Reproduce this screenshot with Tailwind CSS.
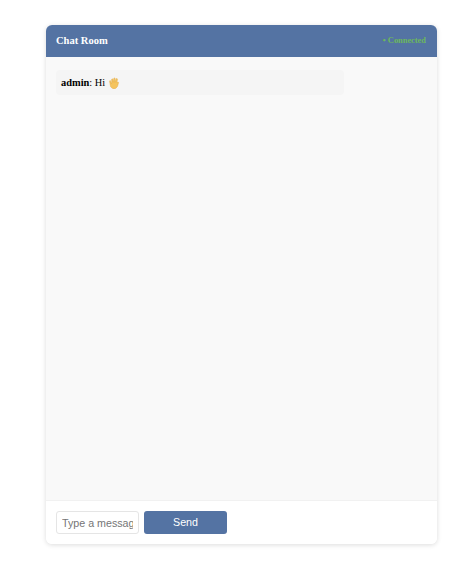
<!DOCTYPE html>
<html lang="en">
<head>
  <meta charset="UTF-8" />
  <title>Chat Room</title>
  <script src="https://cdn.jsdelivr.net/npm/@tailwindcss/browser@4"></script>
</head>
<body class="bg-white h-[565px] overflow-hidden font-['Liberation_Serif',serif]">
  <div class="pt-[25px] pl-[46px]">
    <div class="w-[391px] h-[519px] flex flex-col rounded-md overflow-hidden bg-white shadow-[0_1px_5px_rgba(0,0,0,0.14)]">

      <!-- Header -->
      <div class="h-[32px] shrink-0 flex items-center justify-between pl-[10px] pr-[11px] bg-[#5473a3] text-white">
        <span class="text-[10.5px] font-bold">Chat Room</span>
        <span class="text-[8.4px] font-bold text-[#6cb85c]">• Connected</span>
      </div>

      <!-- Messages -->
      <div class="flex-1 bg-[#f9f9f9] pt-[13px] pl-[10px]">
        <div class="w-[288px] h-[25px] flex items-center pl-[5px] rounded bg-[#f5f5f5] text-[10.4px] text-black">
          <b>admin</b><span>: Hi&nbsp;</span>
          <svg class="w-[12px] h-[12px]" viewBox="0 0 12 12">
            <g transform="rotate(18 6 6)">
              <path d="M2 5 L4 7.6 L2.6 3.2 Q3 2.2 3.8 2.8 L5 5.6 L4.4 1.6 Q5 0.6 5.8 1.4 L6.8 5 L6.8 1.2 Q7.6 0.4 8.2 1.4 L8.6 4.6 Q9.4 3.6 10.2 4 L10.4 8 Q9.8 11.8 6.4 11.6 Q3.6 11.4 2.8 8.6 L1.2 5.6 Q1.2 4.4 2 5 Z" fill="#f5c45e" stroke="#e3ab45" stroke-width="0.4" />
            </g>
          </svg>
        </div>
      </div>

      <!-- Input bar -->
      <div class="h-[44px] shrink-0 flex items-center gap-[5px] pl-[10px] bg-white border-t border-[#f1f1f1]">
        <input type="text" placeholder="Type a message..." class="w-[83px] h-[23px] px-[5px] rounded-[3px] border border-[#e5e5e5] bg-white text-[10.7px] font-['Liberation_Sans',sans-serif] placeholder:text-[#757575] outline-none" />
        <button class="w-[83px] h-[23px] rounded-[3px] bg-[#5473a3] text-white text-[10.7px] font-['Liberation_Sans',sans-serif]">Send</button>
      </div>

    </div>
  </div>
</body>
</html>
